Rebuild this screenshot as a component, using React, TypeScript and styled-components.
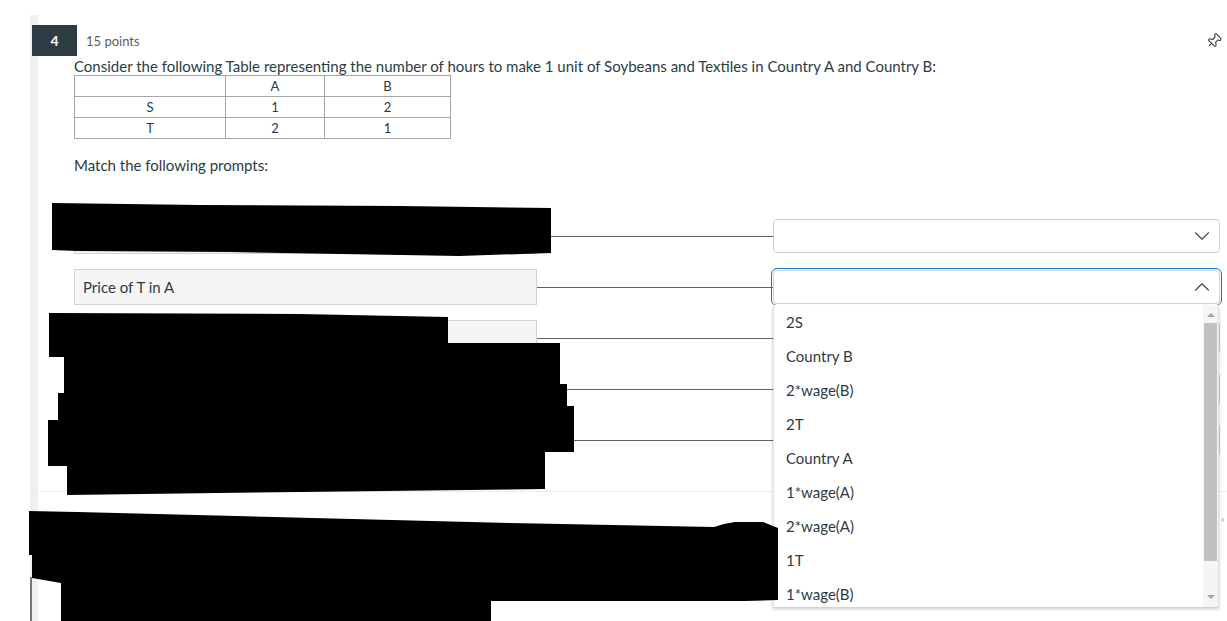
import styled, { createGlobalStyle } from 'styled-components';
import { Pin, ChevronDown, ChevronUp } from 'lucide-react';

const GlobalStyle = createGlobalStyle`
  body {
    margin: 0;
    background: #ffffff;
    font-family: Lato, "Open Sans", "Liberation Sans", sans-serif;
    color: #2d3b45;
  }
`;

const prompts = ['', 'Price of T in A', '', '', ''];
const options = ['2S', 'Country B', '2*wage(B)', '2T', 'Country A', '1*wage(A)', '2*wage(A)', '1T', '1*wage(B)'];

const App = () => {
    return (
        <Page>
            <GlobalStyle />
            <QuestionCard>
                <Header>
                    <Badge>4</Badge>
                    <Points>15 points</Points>
                    <PinButton>
                        <Pin size={16} strokeWidth={1.6} />
                    </PinButton>
                </Header>
                <Body>
                    <QuestionText>
                        Consider the following Table representing the number of hours to make 1 unit of Soybeans and Textiles in Country A and Country B:
                    </QuestionText>
                    <HoursTable>
                        <colgroup>
                            <col style={{ width: 151 }} />
                            <col style={{ width: 99 }} />
                            <col style={{ width: 126 }} />
                        </colgroup>
                        <tbody>
                            <tr><Cell></Cell><Cell>A</Cell><Cell>B</Cell></tr>
                            <tr><Cell>S</Cell><Cell>1</Cell><Cell>2</Cell></tr>
                            <tr><Cell>T</Cell><Cell>2</Cell><Cell>1</Cell></tr>
                        </tbody>
                    </HoursTable>
                    <Instruction>Match the following prompts:</Instruction>
                    <MatchList>
                        {prompts.map((p, i) => (
                            <MatchRow key={i}>
                                <PromptBox>{p}</PromptBox>
                                <Connector />
                                <SelectWrap>
                                    <SelectBox $open={i === 1}>
                                        {i === 1
                                            ? <ChevronUp size={26} strokeWidth={1} />
                                            : <ChevronDown size={26} strokeWidth={1} />}
                                    </SelectBox>
                                    {i === 1 && (
                                        <OptionList>
                                            <Options>
                                                {options.map((o) => <OptionItem key={o}>{o}</OptionItem>)}
                                            </Options>
                                            <ScrollBar>
                                                <ArrowUp />
                                                <Thumb />
                                                <ArrowDown />
                                            </ScrollBar>
                                        </OptionList>
                                    )}
                                </SelectWrap>
                            </MatchRow>
                        ))}
                    </MatchList>
                </Body>
            </QuestionCard>
            <NextCard>
                <NextHeader>›</NextHeader>
            </NextCard>
            <Redactions width="1227" height="621" viewBox="0 0 1227 621">
                <polygon points="52,203 200,205 400,206 551,208 551,253 459,256 230,252 77,251 52,250" />
                <polygon points="49,313 300,314 448,317 448,343 560,343 560,384 567,384 567,406 574,406 574,452 545,452 545,489 300,492 67,495 67,466 48,466 48,420 58,420 58,393 64,393 64,357 49,357" />
                <polygon points="29,511 77,512 510,523 714,527 724,524 735,522 763,522 778,528 778,600 745,601 491,601 491,621 61,621 61,583 32,578 32,555 29,555" />
                <line x1="31" y1="577" x2="31" y2="621" stroke="#000" strokeWidth="1" />
            </Redactions>
        </Page>
    )
}

export default App

const Page = styled.div`
    position: relative;
    width: 1227px;
    height: 621px;
    overflow: hidden;
    padding-top: 15px;
    box-sizing: border-box;
`;

const QuestionCard = styled.section`
    margin-left: 30px;
    height: 477px;
    box-sizing: border-box;
    border-left: 8px solid #f0f0f0;
    border-bottom: 1px solid #ececec;
    padding-top: 10px;
`;

const Header = styled.div`
    display: flex;
    align-items: center;
    height: 31px;
    margin-left: -6px;
    padding-right: 5px;
`;

const Badge = styled.div`
    width: 45px;
    height: 31px;
    background: #2d3b45;
    color: #ffffff;
    font-size: 14px;
    font-weight: 700;
    display: flex;
    align-items: center;
    justify-content: center;
`;

const Points = styled.span`
    margin-left: 9px;
    font-size: 13px;
    color: #555f66;
`;

const PinButton = styled.span`
    margin-left: auto;
    display: flex;
    color: #2d3b45;
    transform: rotate(45deg);
`;

const Body = styled.div`
    padding: 0 7px 0 36px;
`;

const QuestionText = styled.p`
    margin: 1px 0 0;
    font-size: 15px;
    line-height: 18px;
`;

const HoursTable = styled.table`
    border-collapse: collapse;
    width: 377px;
    table-layout: fixed;
`;

const Cell = styled.td`
    border: 1px solid #a5a5a5;
    padding: 0;
    height: 20px;
    font-size: 13px;
    line-height: 20px;
    text-align: center;
`;

const Instruction = styled.p`
    margin: 17px 0 0;
    font-size: 15px;
    line-height: 18px;
`;

const MatchList = styled.div`
    margin-top: 44px;
    display: flex;
    flex-direction: column;
    gap: 15px;
`;

const MatchRow = styled.div`
    display: flex;
    align-items: center;
    height: 36px;
`;

const PromptBox = styled.div`
    width: 463px;
    height: 36px;
    box-sizing: border-box;
    background: #f5f5f5;
    border: 1px solid #d0d4d7;
    padding-left: 8px;
    display: flex;
    align-items: center;
    font-size: 15px;
`;

const Connector = styled.div`
    flex: 1;
    height: 1px;
    background: #56636d;
`;

const SelectWrap = styled.div`
    position: relative;
    width: 447px;
`;

const SelectBox = styled.div<{ $open: boolean }>`
    height: 34px;
    box-sizing: border-box;
    border: 1px solid #ccd0d3;
    border-radius: 4px;
    background: #ffffff;
    display: flex;
    align-items: center;
    justify-content: flex-end;
    padding-right: 4px;
    color: #3b4750;
    ${(p) => (p.$open ? 'outline: 1px solid #1a75b8; outline-offset: 1px;' : '')}
`;

const OptionList = styled.div`
    position: absolute;
    top: 35px;
    left: 0;
    width: 446px;
    height: 302px;
    box-sizing: border-box;
    display: flex;
    background: #ffffff;
    border-left: 1px solid #dfe2e4;
    border-right: 1px solid #dfe2e4;
    box-shadow: 0 2px 3px rgba(0, 0, 0, 0.22);
    overflow: hidden;
    z-index: 2;
`;

const Options = styled.div`
    flex: 1;
    display: flex;
    flex-direction: column;
`;

const OptionItem = styled.div`
    flex-shrink: 0;
    height: 34px;
    line-height: 34px;
    padding-left: 12px;
    font-size: 15px;
    color: #2d3b45;
`;

const ScrollBar = styled.div`
    width: 15px;
    background: #f5f5f5;
    display: flex;
    flex-direction: column;
    align-items: center;
`;

const ArrowUp = styled.div`
    margin-top: 8px;
    width: 0;
    height: 0;
    border-left: 4px solid transparent;
    border-right: 4px solid transparent;
    border-bottom: 4px solid #a3a3a3;
`;

const Thumb = styled.div`
    margin-top: 6px;
    width: 13px;
    height: 238px;
    background: #c1c1c1;
`;

const ArrowDown = styled.div`
    margin-top: auto;
    margin-bottom: 8px;
    width: 0;
    height: 0;
    border-left: 4px solid transparent;
    border-right: 4px solid transparent;
    border-top: 4px solid #a3a3a3;
`;

const NextCard = styled.section`
    margin-left: 30px;
    height: 130px;
    border-left: 8px solid #f0f0f0;
    padding-top: 20px;
    box-sizing: border-box;
`;

const NextHeader = styled.div`
    text-align: right;
    padding-right: 3px;
    font-size: 11px;
    color: #8a8f93;
`;

const Redactions = styled.svg`
    position: absolute;
    top: 0;
    left: 0;
    pointer-events: none;
    z-index: 10;
    fill: #000000;
`;
